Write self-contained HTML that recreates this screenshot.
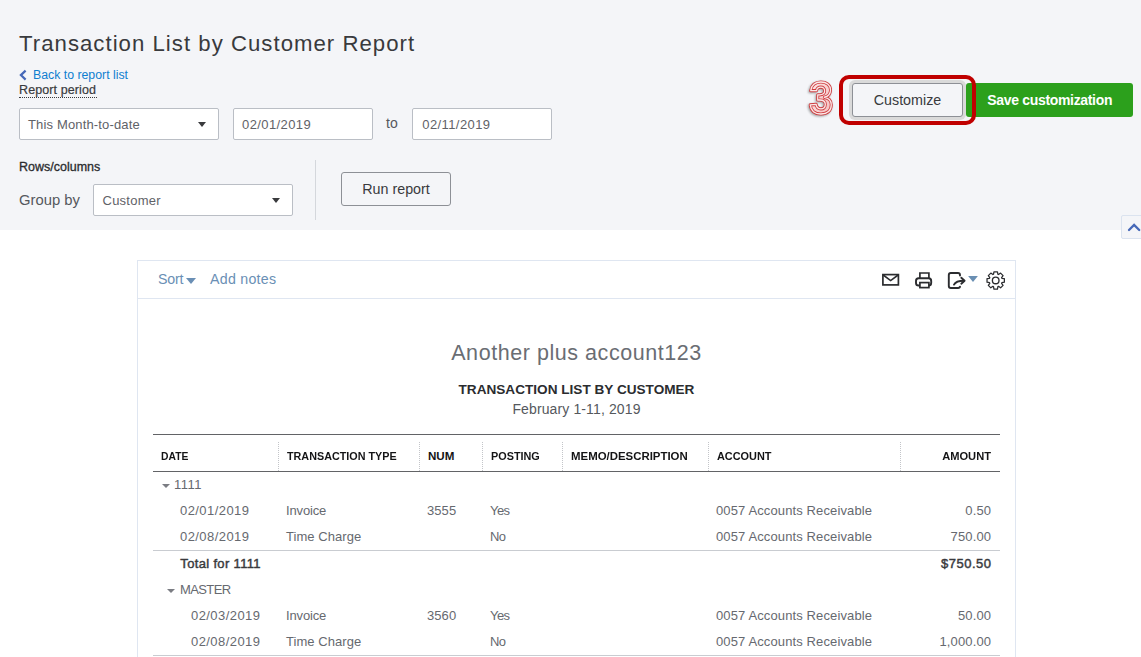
<!DOCTYPE html>
<html>
<head>
<meta charset="utf-8">
<title>Transaction List by Customer Report</title>
<style>
*{box-sizing:border-box;margin:0;padding:0}
html,body{width:1141px;height:657px;overflow:hidden;background:#fff}
body{font-family:"Liberation Sans",sans-serif;color:#393a3d;position:relative}
.abs{position:absolute;white-space:nowrap}
.top{position:absolute;left:0;top:0;width:1141px;height:229.6px;background:#f4f5f8}
.title{left:19px;top:30.4px;font-size:22.2px;letter-spacing:1.02px;line-height:28px;color:#393a3d}
.back{left:33px;top:66.8px;font-size:12.3px;line-height:16px;color:#0f7fd0}
.lbl{font-size:12.5px;line-height:16px;color:#393a3d}
.box{position:absolute;background:#fff;border:1px solid #babec5;border-radius:2px;font-size:13px;color:#5f6267}
.box span{position:absolute;left:8px;top:0;line-height:31px}
.caret{position:absolute;width:0;height:0;border-left:4px solid transparent;border-right:4px solid transparent;border-top:5.5px solid #393a3d}
.btn{position:absolute;border:1px solid #8d9096;border-radius:3px;text-align:center;font-size:14.5px;color:#393a3d;background:#f4f5f8}
.card{position:absolute;left:137px;top:260px;width:879px;height:420px;border:1px solid #dfe6f1;background:#fff}
.tb{position:absolute;left:137px;top:298px;width:879px;height:1px;background:#dfe6f1}
.link{font-size:14.2px;color:#6a8fb5;line-height:18px}
.th{font-size:11.6px;font-weight:bold;color:#141416;line-height:14px;top:449px;transform-origin:0 50%}
.thr{transform-origin:100% 50%}
.td{font-size:13px;color:#66696f;line-height:16px}
.dg{letter-spacing:.43px}
.sep{position:absolute;top:442px;width:0;height:29px;border-left:1px dotted #c3c5c9}
.hl{position:absolute;left:153px;width:847px;height:1px}
.ic{fill:none;stroke:#2b2c2f}
</style>
</head>
<body>
<div class="top"></div>
<div class="abs title">Transaction List by Customer Report</div>
<svg class="abs" style="left:18px;top:68px" width="10" height="14" viewBox="0 0 10 14"><path d="M7.6 2.6 L2.9 7.1 L7.6 11.6" fill="none" stroke="#4668b8" stroke-width="2.2"/></svg>
<div class="abs back">Back to report list</div>
<div class="abs lbl" style="left:19px;top:82.3px;letter-spacing:.1px;-webkit-text-stroke:.2px #393a3d">Report period</div>
<div class="abs" style="left:19px;top:97px;width:78px;height:0;border-top:1px dotted #393a3d"></div>
<div class="box" style="left:19px;top:108px;width:200px;height:32px"><span style="letter-spacing:.15px">This Month-to-date</span><i class="caret" style="left:178px;top:12.5px"></i></div>
<div class="box" style="left:233px;top:108px;width:140px;height:32px"><span style="letter-spacing:.4px">02/01/2019</span></div>
<div class="abs" style="left:386px;top:114.5px;font-size:14px;line-height:16px;color:#55585d">to</div>
<div class="box" style="left:412px;top:108px;width:140px;height:32px"><span style="letter-spacing:.4px;left:9.3px">02/11/2019</span></div>
<div class="abs lbl" style="left:19px;top:159px;color:#2b2c2f;-webkit-text-stroke:.3px #2b2c2f">Rows/columns</div>
<div class="abs" style="left:19px;top:191px;font-size:14.8px;line-height:18px;color:#55585d">Group by</div>
<div class="box" style="left:93px;top:184px;width:200px;height:32px"><span style="left:8.5px;letter-spacing:.25px">Customer</span><i class="caret" style="left:178px;top:12.5px"></i></div>
<div class="abs" style="left:315px;top:160px;width:1px;height:60px;background:#d4d7dc"></div>
<div class="btn" style="left:341px;top:172px;width:110px;height:34px;line-height:32px;font-size:14.3px">Run report</div>
<svg class="abs" style="left:800px;top:70px;filter:drop-shadow(-.5px 1.5px 1.2px rgba(60,60,60,.45))" width="40" height="52" viewBox="0 0 40 52"><defs><linearGradient id="g3" x1="0" y1="0" x2="1" y2="1"><stop offset="0" stop-color="#fdeeee"/><stop offset="1" stop-color="#f3b9b9"/></linearGradient></defs><g font-family="Liberation Sans, sans-serif" font-weight="bold" font-size="45.6" transform="translate(9.3,43.6) scale(0.93,1)"><text x="0" y="0" fill="url(#g3)" stroke="#cf3b3e" stroke-width="3.2" stroke-linejoin="round">3</text><text x="0" y="0" fill="none" stroke="#fbe9e9" stroke-width="1.3" stroke-linejoin="round">3</text></g></svg>
<div class="abs" style="left:849px;top:80px;width:117px;height:40px;background:#dadada;border-radius:6px"></div>
<div class="btn" style="left:852px;top:83px;width:111px;height:34px;line-height:33.2px;font-size:14.3px">Customize</div>
<div class="abs" style="left:966px;top:83px;width:167px;height:34px;line-height:35px;background:#2ca01c;border-radius:3px;color:#fff;font-weight:bold;font-size:14px;letter-spacing:-.33px;text-align:center;padding-left:.5px">Save customization</div>
<div class="abs" style="left:839px;top:75px;width:137px;height:50px;border:4px solid #c00000;border-radius:10px"></div>
<div class="abs" style="left:1121px;top:215px;width:24px;height:23.6px;background:#f4f5f8;border:1px solid #dbe3ef;border-radius:2px"></div>
<svg class="abs" style="left:1121px;top:215px" width="20" height="24" viewBox="0 0 20 24"><path d="M8 15 L13.1 9.9 L18.2 15" fill="none" stroke="#4668b8" stroke-width="2.3" stroke-linecap="round"/></svg>
<div class="card"></div>
<div class="tb"></div>
<div class="abs link" style="left:158px;top:270px;letter-spacing:-.2px">Sort</div>
<i class="caret" style="left:186px;top:278px;border-top:6px solid #6a8fb5;border-left-width:5px;border-right-width:5px"></i>
<div class="abs link" style="left:210px;top:270px;letter-spacing:.27px">Add notes</div>
<svg class="abs" style="left:870px;top:260px" width="150" height="40" viewBox="0 0 150 40">
<rect class="ic" x="12.9" y="14.6" width="15.5" height="10.3" stroke-width="1.7"/><path class="ic" d="M13.2 15 L20.65 20.6 L28.1 15" stroke-width="1.6"/>
<path class="ic" d="M49.9 19 V13 H58.9 V19" stroke-width="1.7"/><rect class="ic" x="46" y="18.3" width="15.2" height="7.2" rx="2.6" stroke-width="1.9"/><rect x="49.9" y="22.6" width="9" height="5" fill="#fff" stroke="#2b2c2f" stroke-width="1.7"/>
<path class="ic" d="M90 15.6 V15 Q90 13 88 13 H80.8 Q78.8 13 78.8 15 V26 Q78.8 28 80.8 28 H88 Q90 28 90 26.6" stroke-width="1.9" stroke-linecap="round"/><path class="ic" d="M84 24.6 Q86 20.7 94 20.7" stroke-width="1.9" stroke-linecap="round"/><path class="ic" d="M91.3 17.8 L94.6 20.7 L91.3 23.7" stroke-width="1.9" stroke-linecap="round" stroke-linejoin="round"/>
<path d="M98.1 16 H107.9 L103 21.9Z" fill="#6a8fb3"/>
<path class="ic" d="M123.51 14.28 L123.94 11.78 L127.46 11.78 L127.89 14.28 L128.52 14.54 L130.58 13.07 L133.08 15.57 L131.61 17.63 L131.87 18.26 L134.37 18.69 L134.37 22.21 L131.87 22.64 L131.61 23.27 L133.08 25.33 L130.58 27.83 L128.52 26.36 L127.89 26.62 L127.46 29.12 L123.94 29.12 L123.51 26.62 L122.88 26.36 L120.82 27.83 L118.32 25.33 L119.79 23.27 L119.53 22.64 L117.03 22.21 L117.03 18.69 L119.53 18.26 L119.79 17.63 L118.32 15.57 L120.82 13.07 L122.88 14.54Z" stroke-width="1.25" stroke-linejoin="round"/><circle class="ic" cx="125.70" cy="20.45" r="3.3" stroke-width="1.35"/>
</svg>
<div class="abs" style="left:137px;width:879px;top:339px;text-align:center;font-size:21.5px;letter-spacing:.55px;line-height:28px;color:#6a6d73">Another plus account123</div>
<div class="abs" style="left:137px;width:879px;top:381.7px;text-align:center;font-size:13.6px;line-height:16px;font-weight:bold;color:#2b2c2f">TRANSACTION LIST BY CUSTOMER</div>
<div class="abs" style="left:137px;width:879px;top:400.5px;text-align:center;font-size:14px;letter-spacing:.12px;line-height:16px;color:#55585d">February 1-11, 2019</div>
<div class="hl" style="top:434px;background:#626366"></div>
<div class="hl" style="top:471px;background:#626366"></div>
<div class="sep" style="left:278px"></div>
<div class="sep" style="left:419px"></div>
<div class="sep" style="left:482px"></div>
<div class="sep" style="left:562px"></div>
<div class="sep" style="left:708px"></div>
<div class="sep" style="left:900px"></div>
<div class="abs th" style="left:161px;transform:scaleX(0.89)">DATE</div>
<div class="abs th" style="left:287px;transform:scaleX(0.93)">TRANSACTION TYPE</div>
<div class="abs th" style="left:428px;transform:scaleX(1.0)">NUM</div>
<div class="abs th" style="left:491px;transform:scaleX(0.935)">POSTING</div>
<div class="abs th" style="left:571px;transform:scaleX(0.985)">MEMO/DESCRIPTION</div>
<div class="abs th" style="left:717px;transform:scaleX(0.94)">ACCOUNT</div>
<div class="abs th thr" style="left:900px;width:91px;text-align:right;transform:scaleX(.96)">AMOUNT</div>
<i class="caret" style="left:161.5px;top:484.4px;border-left-width:4px;border-right-width:4px;border-top:4px solid #7b7d83"></i>
<div class="abs td" style="left:174px;top:476.9px;letter-spacing:.45px">1111</div>
<div class="abs td dg" style="left:180px;top:502.70000000000005px">02/01/2019</div>
<div class="abs td" style="left:286px;top:502.70000000000005px;letter-spacing:-.15px">Invoice</div>
<div class="abs td" style="left:427px;top:502.70000000000005px;letter-spacing:.08px">3555</div>
<div class="abs td" style="left:490px;top:502.70000000000005px;letter-spacing:-.6px">Yes</div>
<div class="abs td" style="left:716px;top:502.70000000000005px;letter-spacing:.12px">0057 Accounts Receivable</div>
<div class="abs td" style="left:900px;width:91.2px;text-align:right;top:502.70000000000005px;letter-spacing:.15px">0.50</div>
<div class="abs td dg" style="left:180px;top:528.5px">02/08/2019</div>
<div class="abs td" style="left:286px;top:528.5px;letter-spacing:.05px">Time Charge</div>
<div class="abs td" style="left:490px;top:528.5px;letter-spacing:-.6px">No</div>
<div class="abs td" style="left:716px;top:528.5px;letter-spacing:.12px">0057 Accounts Receivable</div>
<div class="abs td" style="left:900px;width:91.2px;text-align:right;top:528.5px;letter-spacing:.15px">750.00</div>
<div class="hl" style="top:550px;background:#c9ccd1"></div>
<div class="abs td" style="left:180.3px;top:555.5px;color:#393a3d;-webkit-text-stroke:.45px #393a3d;letter-spacing:.34px">Total for 1111</div>
<div class="abs td" style="left:900px;width:91px;text-align:right;top:555.5px;color:#393a3d;-webkit-text-stroke:.45px #393a3d;letter-spacing:.52px;width:91.6px">$750.50</div>
<i class="caret" style="left:167px;top:589.2px;border-left-width:4px;border-right-width:4px;border-top:4px solid #7b7d83"></i>
<div class="abs td" style="left:180px;top:581.7px;letter-spacing:-.6px">MASTER</div>
<div class="abs td dg" style="left:191px;top:607.5px">02/03/2019</div>
<div class="abs td" style="left:286px;top:607.5px;letter-spacing:-.15px">Invoice</div>
<div class="abs td" style="left:427px;top:607.5px;letter-spacing:.08px">3560</div>
<div class="abs td" style="left:490px;top:607.5px;letter-spacing:-.6px">Yes</div>
<div class="abs td" style="left:716px;top:607.5px;letter-spacing:.12px">0057 Accounts Receivable</div>
<div class="abs td" style="left:900px;width:91.2px;text-align:right;top:607.5px;letter-spacing:.15px">50.00</div>
<div class="abs td dg" style="left:191px;top:633.7px">02/08/2019</div>
<div class="abs td" style="left:286px;top:633.7px;letter-spacing:.05px">Time Charge</div>
<div class="abs td" style="left:490px;top:633.7px;letter-spacing:-.6px">No</div>
<div class="abs td" style="left:716px;top:633.7px;letter-spacing:.12px">0057 Accounts Receivable</div>
<div class="abs td" style="left:900px;width:91.2px;text-align:right;top:633.7px;letter-spacing:.15px">1,000.00</div>
<div class="hl" style="top:655px;background:#c9ccd1"></div>
</body>
</html>
